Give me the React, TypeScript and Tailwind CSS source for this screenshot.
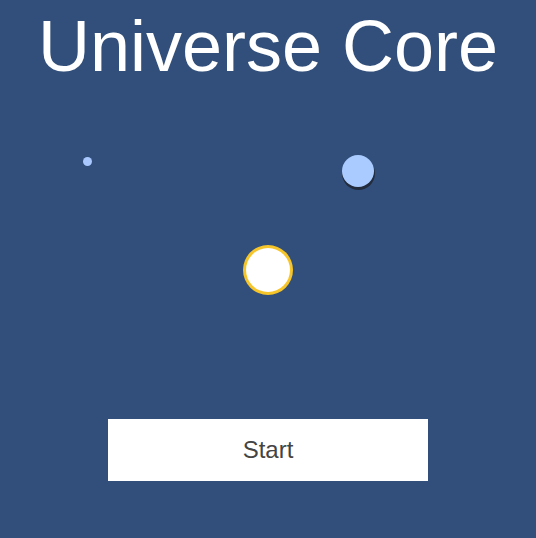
export default function App() {
  return (
    <div
      className="w-[536px] h-[538px] bg-[#314f7a] flex flex-col items-center overflow-hidden"
      style={{ fontFamily: '"Liberation Sans", Arial, sans-serif' }}
    >
      <h1 className="mt-[4px] text-[72px] leading-[84px] text-white font-normal">Universe Core</h1>

      {/* orbit canvas */}
      <div className="relative w-[536px] h-[331px]">
        {/* small moon */}
        <div className="absolute left-[83px] top-[69px] w-[9px] h-[9px] rounded-full bg-[#a8c8ff]" />
        {/* planet */}
        <div className="absolute left-[342px] top-[69px] w-[33px] h-[33px] rounded-full bg-[#222c3d]" />
        <div className="absolute left-[342px] top-[67px] w-[32px] h-[32px] rounded-full bg-[#aacbff]" />
        {/* sun */}
        <div className="absolute left-[243px] top-[157px] w-[50px] h-[50px] rounded-full bg-[#f6c52a] p-[3px]">
          <div className="w-full h-full rounded-full bg-[radial-gradient(circle,#ffffff_70%,#fff4d8_85%,#ffe28a_100%)]" />
        </div>
      </div>

      <button className="w-[320px] h-[62px] bg-white text-[#444444] text-[24px]">Start</button>
    </div>
  );
}
